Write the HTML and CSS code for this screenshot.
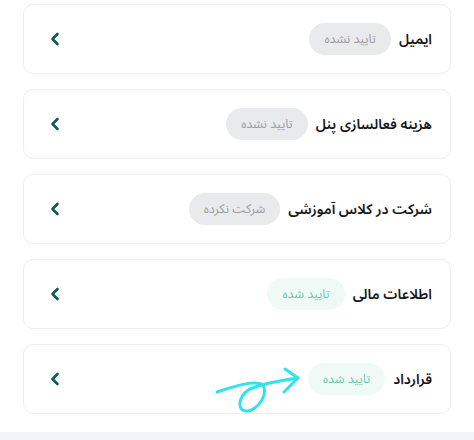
FILE: index.html
```html
<!DOCTYPE html>
<html lang="fa" dir="rtl">
<head>
<meta charset="utf-8">
<link rel="stylesheet" href="styles.css">
</head>
<body>
<div class="page">
  <div class="list">
    <div class="card">
      <span class="title">ایمیل</span>
      <span class="badge badge-gray">تایید نشده</span>
      <svg class="chev" viewBox="0 0 10 14" width="10" height="14"><path d="M7.5 2 L2.5 7 L7.5 12" fill="none" stroke="#0c5c4f" stroke-width="2.6" stroke-linecap="round" stroke-linejoin="round"/></svg>
    </div>
    <div class="card">
      <span class="title">هزینه فعالسازی پنل</span>
      <span class="badge badge-gray">تایید نشده</span>
      <svg class="chev" viewBox="0 0 10 14" width="10" height="14"><path d="M7.5 2 L2.5 7 L7.5 12" fill="none" stroke="#0c5c4f" stroke-width="2.6" stroke-linecap="round" stroke-linejoin="round"/></svg>
    </div>
    <div class="card">
      <span class="title">شرکت در کلاس آموزشی</span>
      <span class="badge badge-gray">شرکت نکرده</span>
      <svg class="chev" viewBox="0 0 10 14" width="10" height="14"><path d="M7.5 2 L2.5 7 L7.5 12" fill="none" stroke="#0c5c4f" stroke-width="2.6" stroke-linecap="round" stroke-linejoin="round"/></svg>
    </div>
    <div class="card">
      <span class="title">اطلاعات مالی</span>
      <span class="badge badge-green">تایید شده</span>
      <svg class="chev" viewBox="0 0 10 14" width="10" height="14"><path d="M7.5 2 L2.5 7 L7.5 12" fill="none" stroke="#0c5c4f" stroke-width="2.6" stroke-linecap="round" stroke-linejoin="round"/></svg>
    </div>
    <div class="card">
      <span class="title">قرارداد</span>
      <span class="badge badge-green">تایید شده</span>
      <svg class="chev" viewBox="0 0 10 14" width="10" height="14"><path d="M7.5 2 L2.5 7 L7.5 12" fill="none" stroke="#0c5c4f" stroke-width="2.6" stroke-linecap="round" stroke-linejoin="round"/></svg>
      <svg class="scribble" viewBox="0 0 110 72" width="110" height="72">
        <g fill="none" stroke="#2fe2ef" stroke-width="3" stroke-linecap="round" stroke-linejoin="round">
          <path d="M4 48 C22 42 38 37 48 40 C58 46 45 68 33 67 C22 66 26 48 42 43 C57 38 72 36 85 34"/>
          <path d="M72 25 L85 34 L71 48"/>
        </g>
      </svg>
    </div>
  </div>
  <div class="bottom-bar"></div>
</div>
</body>
</html>
```

FILE: styles.css
```css
html, body {
  margin: 0;
  padding: 0;
  background: #ffffff;
}
body {
  font-family: "Noto Sans Arabic", "Vazirmatn", "DejaVu Sans Condensed", "DejaVu Sans", sans-serif;
  width: 474px;
  height: 440px;
  overflow: hidden;
}
.page {
  display: flex;
  flex-direction: column;
}
.list {
  display: flex;
  flex-direction: column;
  gap: 15px;
  padding: 4px 23px 0 23px;
}
.card {
  position: relative;
  box-sizing: border-box;
  height: 70px;
  border: 1px solid #eceef1;
  border-radius: 10px;
  display: flex;
  align-items: center;
  gap: 8px;
  padding: 0 18px 0 26px;
  background: #fff;
}
.title {
  font-size: 14px;
  font-weight: 600;
  color: #151515;
  white-space: nowrap;
}
.badge {
  height: 32px;
  line-height: 32px;
  border-radius: 16px;
  padding: 0 15px;
  font-size: 12.5px;
  white-space: nowrap;
}
.badge-gray {
  background: #e9eaec;
  color: #9a9da2;
}
.badge-green {
  background: #effaf7;
  color: #6bc9ae;
}
.chev {
  margin-right: auto;
  display: block;
}
.scribble {
  position: absolute;
  left: 189px;
  top: -1px;
}
.bottom-bar {
  margin-top: 18px;
  height: 10px;
  background: #f3f4f9;
}
```
